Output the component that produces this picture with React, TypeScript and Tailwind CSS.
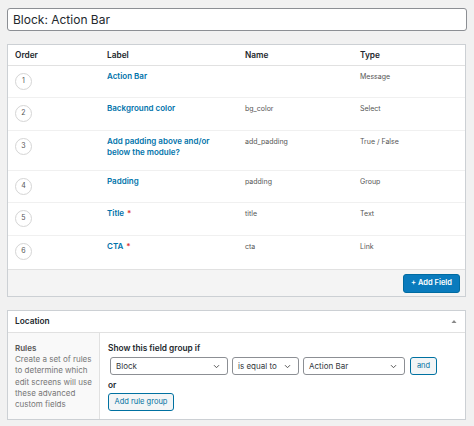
import React from "react";

const rows = [
  { n: 1, label: "Action Bar", name: "", type: "Message", h: "h-[32px]" },
  { n: 2, label: "Background color", name: "bg_color", type: "Select", h: "h-[33px]" },
  { n: 3, label: "Add padding above and/or below the module?", name: "add_padding", type: "True / False", h: "h-[40px]" },
  { n: 4, label: "Padding", name: "padding", type: "Group", h: "h-[32px]" },
  { n: 5, label: "Title", name: "title", type: "Text", h: "h-[33px]", req: true },
  { n: 6, label: "CTA", name: "cta", type: "Link", h: "h-[33px]", req: true },
];

function Chevron() {
  return (
    <svg width="7" height="5" viewBox="0 0 7 5" className="shrink-0">
      <path d="M1 1.2 L3.5 3.7 L6 1.2" fill="none" stroke="#555" strokeWidth="1" />
    </svg>
  );
}

function Select({ text, w }: { text: string; w: string }) {
  return (
    <div className={`${w} h-[18px] border border-[#8c8f94] rounded-[3px] bg-white flex items-center justify-between pl-[5px] pr-[7px] text-[8px] text-[#32373c]`}>
      <span>{text}</span>
      <Chevron />
    </div>
  );
}

export default function App() {
  return (
    <div className="w-[474px] h-[426px] bg-[#f1f1f1] pt-[8px] px-[7px] font-['Inter','Liberation_Sans',sans-serif] text-[#32373c] overflow-hidden">
      <div className="w-[460px] h-[23px] bg-white border border-[#8c8f94] rounded-[3px] flex items-center pl-[5px] text-[12px] text-[#23282d]">
        Block: Action Bar
      </div>

      <div className="mt-[13px] w-[459px] bg-white border border-[#ccd0d4]">
        <div className="grid grid-cols-[92px_138px_115px_1fr] h-[21px] items-center border-b border-[#e1e1e1] text-[8.3px] font-semibold text-[#23282d]">
          <div className="pl-[7px]">Order</div>
          <div className="pl-[7px]">Label</div>
          <div className="pl-[7px]">Name</div>
          <div className="pl-[7px]">Type</div>
        </div>
        {rows.map((r, i) => (
          <div
            key={r.n}
            className={`grid grid-cols-[92px_138px_115px_1fr] ${r.h} ${i < rows.length - 1 ? "border-b border-[#f0f0f0]" : ""}`}
          >
            <div className="pl-[7px] pt-[7px]">
              <div className="w-[17px] h-[17px] rounded-full border border-[#d5d5d5] flex items-center justify-center text-[7px] text-[#555]">
                {r.n}
              </div>
            </div>
            <div className="pl-[7px] pt-[5px] pr-[4px] text-[8px] font-semibold text-[#0073aa] leading-[11px]">
              {r.label}
              {r.req && <span className="text-[#dc3232] ml-[3px]">*</span>}
            </div>
            <div className="pl-[7px] pt-[5px] text-[7px] text-[#555] leading-[11px]">{r.name}</div>
            <div className="pl-[7px] pt-[5px] text-[7px] text-[#555] leading-[11px]">{r.type}</div>
          </div>
        ))}
        <div className="h-[27px] bg-[#f4f4f4] border-t border-[#e1e1e1] flex items-center justify-end pr-[5px]">
          <div className="w-[57px] h-[19px] rounded-[3px] bg-[#0a7bbd] border border-[#006ba1] flex items-center justify-center text-[7.5px] font-semibold text-white">
            + Add Field
          </div>
        </div>
      </div>

      <div className="mt-[13px] w-[459px] bg-white border border-[#ccd0d4]">
        <div className="h-[22px] flex items-center justify-between pl-[7px] pr-[8px] border-b border-[#e1e1e1] text-[8.3px] font-semibold text-[#23282d]">
          <span>Location</span>
          <svg width="6" height="5" viewBox="0 0 6 5">
            <path d="M0.5 4 L3 1 L5.5 4 Z" fill="#888" />
          </svg>
        </div>
        <div className="flex h-[86px]">
          <div className="w-[92px] shrink-0 bg-[#f9f9f9] border-r border-[#e1e1e1] pl-[7px] pt-[10px]">
            <div className="text-[8px] font-semibold text-[#555] leading-[11px]">Rules</div>
            <div className="text-[8px] text-[#777] leading-[11.3px]">
              Create a set of rules to determine which edit screens will use these advanced custom fields
            </div>
          </div>
          <div className="pl-[8px] pt-[10px]">
            <div className="text-[8.3px] font-semibold text-[#23282d] leading-[11px]">Show this field group if</div>
            <div className="mt-[3px] flex items-center gap-[4px] ml-[2px]">
              <Select text="Block" w="w-[118px]" />
              <Select text="is equal to" w="w-[67px]" />
              <Select text="Action Bar" w="w-[102px]" />
              <div className="ml-[1px] w-[27px] h-[18px] rounded-[3px] bg-[#f3f5f6] border border-[#0071a1] flex items-center justify-center text-[7.5px] text-[#0071a1]">
                and
              </div>
            </div>
            <div className="mt-[5px] text-[8.3px] font-semibold text-[#23282d] leading-[11px]">or</div>
            <div className="mt-[2px] w-[66px] h-[18px] rounded-[3px] bg-[#f3f5f6] border border-[#0071a1] flex items-center justify-center text-[7.5px] text-[#0071a1]">
              Add rule group
            </div>
          </div>
        </div>
      </div>
    </div>
  );
}
